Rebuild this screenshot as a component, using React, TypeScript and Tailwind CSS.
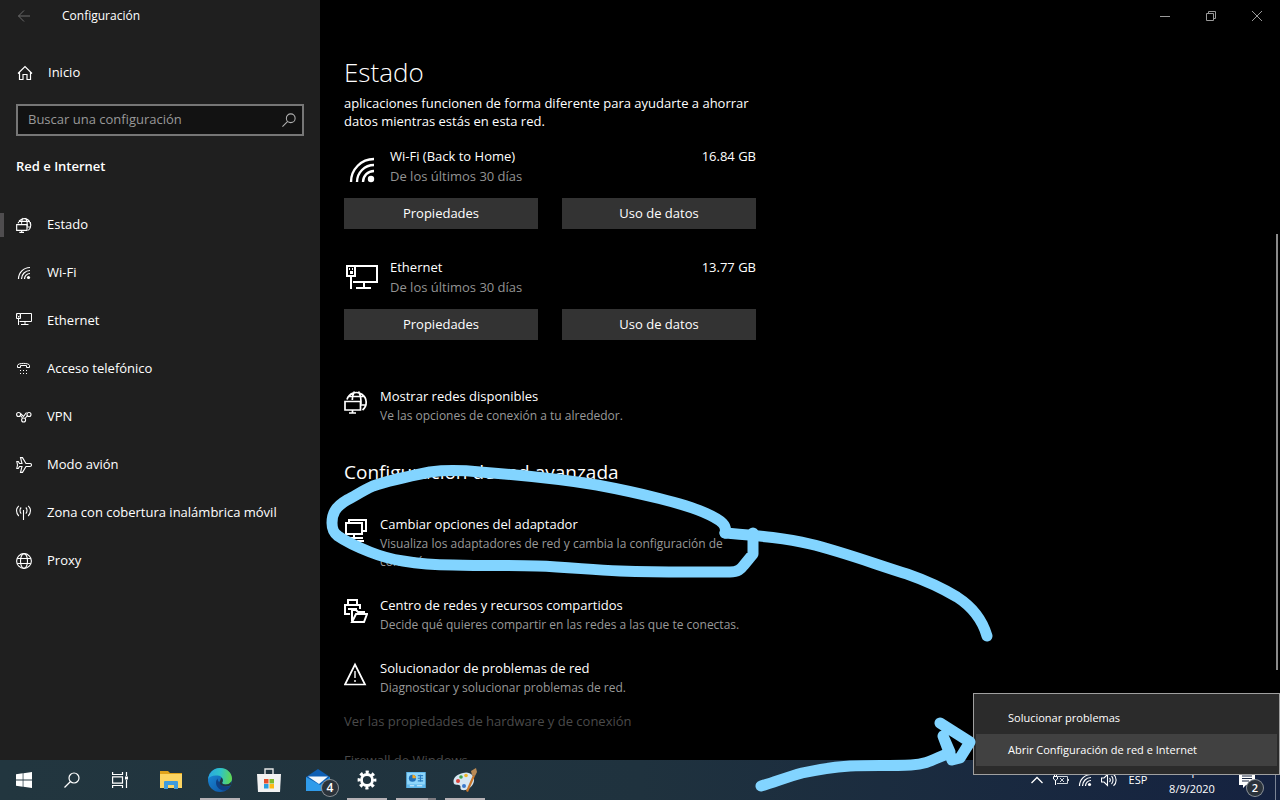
import type { ReactNode } from "react";

type IconProps = { className?: string };

const stroke = {
  fill: "none",
  stroke: "currentColor",
  strokeWidth: 2,
};

function GlobeMonitorIcon({ className }: IconProps) {
  return (
    <svg viewBox="0 0 24 24" className={className} {...stroke} strokeWidth="1.700">
      <path d="M3 9.500A9.800 9.800 0 1 1 18.500 20M10.500 1.500C8.800 4 8.300 7 8.300 10M14.500 1.500C16.500 5 17.200 10 16.800 14M4 6.500H21M17 15H22" />
      <path d="M1 11.500H16.500V20H1ZM8.500 20V23M5 23H12" />
    </svg>
  );
}

function WifiIcon({ className }: IconProps) {
  return (
    <svg viewBox="-4 -4 32 32" className={className} {...stroke} strokeWidth="2.400">
      <path d="M1 24A23 23 0 0 1 24 1M7 24A17 17 0 0 1 24 7M13 24A11 11 0 0 1 24 13" />
      <circle cx="21" cy="21" r="3.200" fill="currentColor" stroke="none" />
    </svg>
  );
}

function EthernetIcon({ className }: IconProps) {
  return (
    <svg viewBox="0 0 32 32" className={className} {...stroke}>
      <path d="M1 1H9V11H1ZM5 11V24M9 1H31V17H7M18 17V23M10 23H25" />
      <path d="M3 3H4V5H3ZM6 3H7V5H6ZM4 6H7V9H4Z" fill="currentColor" stroke="none" />
    </svg>
  );
}

function PhoneIcon({ className }: IconProps) {
  return (
    <svg viewBox="0 0 16 16" className={className} fill="none" stroke="currentColor">
      <path d="M1.500 6.500V4.500C1.500 1.700 13.500 1.700 13.500 4.500V6.500H10.500V4.500H4.500V6.500Z" />
      <path d="M4 9.500H5M7 9.500H8M10 9.500H11M4 12.500H5M7 12.500H8M10 12.500H11" />
    </svg>
  );
}

function VpnIcon({ className }: IconProps) {
  return (
    <svg viewBox="0 0 16 16" className={className} fill="none" stroke="currentColor" strokeWidth="1.100">
      <circle cx="2.600" cy="5.500" r="2" />
      <circle cx="13" cy="5.500" r="2" />
      <circle cx="7.600" cy="11" r="2" />
      <path d="M4.500 4.500L7.500 7.500L10.500 3.500M4.500 6.500L6.500 9M11.500 6.500L9 9.500" />
    </svg>
  );
}

function PlaneIcon({ className }: IconProps) {
  return (
    <svg viewBox="0 0 16 16" className={className} fill="none" stroke="currentColor" strokeWidth="1.100">
      <path d="M4.500 .600H6.500L10 6.500H14C16 6.500 16 9.500 14 9.500H10L6.500 15.400H4.500L6 9.500H3.500L2.300 11.500H.800L1.500 8L.800 4.500H2.300L3.500 6.500H6Z" />
    </svg>
  );
}

function HotspotIcon({ className }: IconProps) {
  return (
    <svg viewBox="0 0 16 16" className={className} fill="none" stroke="currentColor" strokeWidth="1.100">
      <path d="M7.500 5V15M5.200 2.500C3.600 4 3.600 7 5.200 8.600M9.800 2.500C11.400 4 11.400 7 9.800 8.600M2.800 .800C-.200 3.500-.200 8 2.800 11M12.200 .800C15.200 3.500 15.200 8 12.200 11" />
    </svg>
  );
}

function GlobeIcon({ className }: IconProps) {
  return (
    <svg viewBox="0 0 16 16" className={className} fill="none" stroke="currentColor" strokeWidth="1.100">
      <circle cx="8" cy="8" r="7.400" />
      <ellipse cx="8" cy="8" rx="3.500" ry="7.400" />
      <path d="M1.200 5.500H14.800M1.200 10.500H14.800" />
    </svg>
  );
}

function HomeIcon({ className }: IconProps) {
  return (
    <svg viewBox="0 0 16 16" className={className} fill="none" stroke="currentColor" strokeWidth="1.200">
      <path d="M1 8.500L8 1.500L15 8.500M2.500 7.500V14.500H6V9.500H10V14.500H13.500V7.500" />
    </svg>
  );
}

function AdapterIcon({ className }: IconProps) {
  return (
    <svg viewBox="0 0 24 24" className={className} {...stroke}>
      <path d="M5 5V2H22V13H19M2 5H18V16H2ZM10 16V20M4 20H19M13 23H20" />
    </svg>
  );
}

function SharingIcon({ className }: IconProps) {
  return (
    <svg viewBox="0 0 24 24" className={className} {...stroke}>
      <path d="M4 6V1H13V6M6 15H1V6H16V10M4 10H6M6 10H13" />
      <path d="M8 22V11H12L14 13H20V15M8 23L12 15H23L20 23Z" />
    </svg>
  );
}

function WarningIcon({ className }: IconProps) {
  return (
    <svg viewBox="0 0 24 24" className={className} {...stroke} strokeWidth="1.700">
      <path d="M11 2.500L21 22.500H1Z" />
      <path d="M11 9V16M11 18V20" strokeWidth="1.400" />
    </svg>
  );
}

function SearchIcon({ className }: IconProps) {
  return (
    <svg viewBox="0 0 16 16" className={className} fill="none" stroke="currentColor" strokeWidth="1.200">
      <circle cx="10" cy="6" r="5" />
      <path d="M6.500 9.500L.500 15.500" />
    </svg>
  );
}

const navItems = [
  { label: "Estado", icon: GlobeMonitorIcon, active: true },
  { label: "Wi-Fi", icon: WifiIcon },
  { label: "Ethernet", icon: EthernetIcon },
  { label: "Acceso telefónico", icon: PhoneIcon },
  { label: "VPN", icon: VpnIcon },
  { label: "Modo avión", icon: PlaneIcon },
  { label: "Zona con cobertura inalámbrica móvil", icon: HotspotIcon },
  { label: "Proxy", icon: GlobeIcon },
];

function Sidebar() {
  return (
    <aside className="w-80 shrink-0 bg-[#1f1f1f]">
      <div className="flex h-8 items-center">
        <button aria-label="Atrás" className="flex w-12 justify-center text-[#6b6b6b]">
          <svg viewBox="0 0 12 12" className="size-3" fill="none" stroke="currentColor">
            <path d="M6 .500L.500 6L6 11.500M.500 6H12" />
          </svg>
        </button>
        <span className="pl-3.5 text-xs">Configuración</span>
      </div>
      <a href="#inicio" className="mt-[17px] flex h-12 items-center gap-[15px] pl-[17px]">
        <HomeIcon className="size-4" />
        Inicio
      </a>
      <div className="mx-4 mt-[7px] flex h-8 items-center border-2 border-[#767676] bg-[#121212] pr-1.5 pl-2.5">
        <input
          type="text"
          aria-label="Buscar una configuración"
          placeholder="Buscar una configuración"
          className="min-w-0 flex-1 bg-transparent outline-none placeholder:text-[#999999]"
        />
        <SearchIcon className="size-3.5 text-[#b0b0b0]" />
      </div>
      <h2 className="mt-4 h-7 pl-4 leading-7 font-semibold">Red e Internet</h2>
      <nav className="mt-[21px]">
        {navItems.map(({ label, icon: Icon, active }) => (
          <a key={label} href="#" className="flex h-12 items-center">
            <span className={active ? "h-6 w-1 bg-[#4f4d4f]" : "h-6 w-1"} />
            <Icon className="mr-[15px] ml-3 size-4" />
            {label}
          </a>
        ))}
      </nav>
    </aside>
  );
}

function Network({ icon, name, usage }: { icon: ReactNode; name: string; usage: string }) {
  return (
    <section>
      <div className="flex leading-5">
        <div className="mt-2 mr-2.5 h-8 w-9 px-0.5">{icon}</div>
        <div className="flex-1">
          <p>{name}</p>
          <p className="text-[#939393]">De los últimos 30 días</p>
        </div>
        <p>{usage}</p>
      </div>
      <div className="mt-3 grid grid-cols-2 gap-6">
        <button className="h-[31px] bg-[#333333]">Propiedades</button>
        <button className="h-[31px] bg-[#333333]">Uso de datos</button>
      </div>
    </section>
  );
}

function Option({ icon, title, children }: { icon: ReactNode; title: string; children: ReactNode }) {
  return (
    <a href="#" className="flex gap-3">
      <span className="mt-1 size-6 shrink-0">{icon}</span>
      <span>
        <span className="block leading-[21px]">{title}</span>
        <span className="block text-xs leading-[18px] text-[#999999]">{children}</span>
      </span>
    </a>
  );
}

function WindowControls() {
  return (
    <div className="flex h-8 justify-end text-[#9a9a9a]">
      <button aria-label="Minimizar" className="flex w-[46px] items-center justify-center">
        <svg viewBox="0 0 10 10" className="size-2.5" fill="none" stroke="currentColor">
          <path d="M0 5.500H10" />
        </svg>
      </button>
      <button aria-label="Restaurar" className="flex w-[46px] items-center justify-center">
        <svg viewBox="0 0 10 10" className="size-2.5" fill="none" stroke="currentColor">
          <path d="M.500 2.500H7.500V9.500H.500ZM2.500 2.500V.500H9.500V7.500H7.500" />
        </svg>
      </button>
      <button aria-label="Cerrar" className="flex w-[46px] items-center justify-center">
        <svg viewBox="0 0 10 10" className="size-2.5" fill="none" stroke="currentColor">
          <path d="M0 0L10 10M10 0L0 10" />
        </svg>
      </button>
    </div>
  );
}

function Content() {
  return (
    <main className="flex min-w-0 flex-1 flex-col bg-black">
      <WindowControls />
      <div className="flex min-h-0 flex-1">
        <div className="flex-1 overflow-hidden pt-5 pl-6">
          <div className="w-full max-w-[412px]">
            <h1 className="h-[42px] text-[26px] leading-10 font-light">Estado</h1>
            <p className="leading-[18px]">
              aplicaciones funcionen de forma diferente para ayudarte a ahorrar datos mientras estás en esta red.
            </p>
            <div className="mt-4 flex flex-col gap-7">
              <Network icon={<WifiIcon className="size-8" />} name="Wi-Fi (Back to Home)" usage="16.84 GB" />
              <Network icon={<EthernetIcon className="size-8" />} name="Ethernet" usage="13.77 GB" />
            </div>
            <div className="mt-[46px]">
              <Option icon={<GlobeMonitorIcon className="size-6" />} title="Mostrar redes disponibles">
                Ve las opciones de conexión a tu alrededor.
              </Option>
            </div>
            <h2 className="mt-[33px] text-[19px] leading-7">Configuración de red avanzada</h2>
            <div className="mt-7 flex flex-col gap-6">
              <Option icon={<AdapterIcon className="size-6" />} title="Cambiar opciones del adaptador">
                Visualiza los adaptadores de red y cambia la configuración de conexión.
              </Option>
              <Option icon={<SharingIcon className="size-6" />} title="Centro de redes y recursos compartidos">
                Decide qué quieres compartir en las redes a las que te conectas.
              </Option>
              <Option icon={<WarningIcon className="size-6" />} title="Solucionador de problemas de red">
                Diagnosticar y solucionar problemas de red.
              </Option>
            </div>
            <div className="mt-[15px] flex flex-col items-start gap-[21px] leading-[18px] text-[#4a4a4a]">
              <a href="#">Ver las propiedades de hardware y de conexión</a>
              <a href="#">Firewall de Windows</a>
            </div>
          </div>
        </div>
        <div className="mt-[202px] mr-0.5 h-[436px] w-0.5 shrink-0 bg-[#8a8a8a]" />
      </div>
    </main>
  );
}

function WindowsLogo() {
  return (
    <svg viewBox="0 0 16 16" className="size-4" fill="#fff">
      <path d="M0 2.300L6.700 1.300V7.600H0ZM7.400 1.200L16 0V7.600H7.400ZM0 8.400H6.700V14.700L0 13.700ZM7.400 8.400H16V16L7.400 14.800Z" />
    </svg>
  );
}

function TaskViewIcon() {
  return (
    <svg viewBox="0 0 16 16" className="size-4" fill="none" stroke="#fff" strokeWidth="1.200">
      <path d="M.600 0V2.500H10.500V0M.600 16V13.500H10.500V16M.600 4.800H10.500V11.200H.600ZM14.500 0V4M14.500 8V16" />
      <path d="M13 4.500H16V7.500H13Z" fill="#fff" stroke="none" />
    </svg>
  );
}

function ExplorerIcon() {
  return (
    <svg viewBox="0 0 24 24" className="size-6">
      <path d="M1 3H9L11 5H23V20H1Z" fill="#e0a21b" />
      <path d="M1 6H23V20H1Z" fill="#fcd462" />
      <path d="M5 21V14Q5 13 6 13H18Q19 13 19 14V21H15V17H9V21Z" fill="#3f9bdc" />
    </svg>
  );
}

function EdgeIcon() {
  return (
    <svg viewBox="0 0 24 24" className="size-6">
      <defs>
        <linearGradient id="edgeTop" x1="0" y1=".4" x2="1" y2=".5">
          <stop offset="0" stopColor="#2aa7e0" />
          <stop offset=".5" stopColor="#2fc3c8" />
          <stop offset="1" stopColor="#62d84e" />
        </linearGradient>
        <linearGradient id="edgeLow" x1="0" y1="0" x2="1" y2="1">
          <stop offset="0" stopColor="#1b8fdc" />
          <stop offset="1" stopColor="#0c4c9c" />
        </linearGradient>
      </defs>
      <circle cx="12" cy="12" r="12" fill="url(#edgeLow)" />
      <path d="M.200 11C1 4.500 6 0 12 0C19 0 24 5 24 10.500C24 14.500 21 16.500 18 16.500C15 16.500 13.500 15.500 14.500 14C15.500 12.500 15 8 9.500 7.500C5 7 1.500 8.500 .200 11Z" fill="url(#edgeTop)" />
      <path d="M9.500 10.500C6 15 9 21 15 22.500C18 22.800 21.500 20.500 22.500 18C17 20 12.500 17.500 13.500 15C11 14.500 9.500 13 9.500 10.500Z" fill="#0f3f83" />
      <path d="M13.500 9.500C15.500 11.500 15 13.500 14.300 14.200C13.500 15.400 15 16.500 17.500 16.500C20 16.500 22.500 15.500 23.500 13L23.300 16.800C19 20 12 18.500 11.500 14Z" fill="#22353f" />
    </svg>
  );
}

function StoreIcon() {
  return (
    <svg viewBox="0 0 24 24" className="size-6">
      <path d="M8 7V1H16V7" fill="none" stroke="#e6e6e6" strokeWidth="1.400" />
      <path d="M0 6H24L23 24H1Z" fill="#f2f2f2" />
      <path d="M7 11H11.500V15.500H7Z" fill="#e8502b" />
      <path d="M12.500 11H17V15.500H12.500Z" fill="#7fba2c" />
      <path d="M7 16H11.500V20.500H7Z" fill="#2a9fe0" />
      <path d="M12.500 16H17V20.500H12.500Z" fill="#fdb913" />
    </svg>
  );
}

function MailIcon() {
  return (
    <svg viewBox="0 0 24 24" className="size-6">
      <path d="M0 9L12 1L24 9V22H0Z" fill="#0f5fb4" />
      <path d="M0 9L14 17L24 9V23H0Z" fill="#2f9bea" />
      <path d="M2 8.500H22L13 16Z" fill="#f4f8fc" />
    </svg>
  );
}

function GearIcon() {
  return (
    <svg viewBox="0 0 20 20" className="size-5" fill="none" stroke="#fff">
      <circle cx="10" cy="10" r="5.500" strokeWidth="2.800" />
      <circle cx="10" cy="10" r="7.800" strokeWidth="3.200" strokeDasharray="3.060 3.060" strokeDashoffset="1.530" />
    </svg>
  );
}

function ControlPanelIcon() {
  return (
    <svg viewBox="0 0 22 18" className="h-4 w-5">
      <path d="M0 0H22V18H0Z" fill="#5fb8ec" />
      <path d="M1 1H21V14H1Z" fill="#8fd6fa" />
      <circle cx="7" cy="7" r="4" fill="#2170b8" />
      <path d="M7 7V3A4 4 0 0 1 11 7Z" fill="#f5a623" />
      <path d="M13 4H19M13 7H19M13 10H19M16 3V11" stroke="#2a7fc4" strokeWidth="1.300" />
      <path d="M4 15.500H9M12 15.500H18" stroke="#e9f7ff" />
    </svg>
  );
}

function PaintIcon() {
  return (
    <svg viewBox="0 0 24 24" className="size-6">
      <path d="M10 5C16 3 22 7 21 13C20 19 14 23 9 22C6 21 9 18 6 17C3 16 1 18 .500 14C0 9 5 6 10 5Z" fill="#d5e6f2" />
      <circle cx="5" cy="13" r="2" fill="#d9443c" />
      <circle cx="8" cy="9" r="1.800" fill="#3fa34d" />
      <circle cx="13" cy="7.500" r="1.800" fill="#f0b429" />
      <circle cx="11" cy="18" r="2" fill="#3a78c9" />
      <path d="M20 7L13 23L15 24L22 8Z" fill="#c9772b" />
      <path d="M18 3L23 0L24 4L22 8L19 7Z" fill="#b98a56" />
    </svg>
  );
}

function Badge({ children }: { children: ReactNode }) {
  return (
    <span className="absolute flex size-4 translate-x-3 translate-y-2 items-center justify-center rounded-full bg-[#2b333b] text-xs font-semibold ring-1 ring-[#8b9196]">
      {children}
    </span>
  );
}

const apps = [
  { name: "Explorador de archivos", icon: <ExplorerIcon /> },
  { name: "Microsoft Edge", icon: <EdgeIcon />, open: true },
  { name: "Microsoft Store", icon: <StoreIcon /> },
  { name: "Correo", icon: <MailIcon />, badge: 4 },
  { name: "Ajustes", icon: <GearIcon />, open: true },
  { name: "Panel de control", icon: <ControlPanelIcon />, open: true, stacked: true },
  { name: "Paint", icon: <PaintIcon />, open: true },
];

function Taskbar() {
  return (
    <footer className="flex h-10 shrink-0 justify-between bg-linear-to-r from-[#22363f] via-[#1f323e] to-[#152240]">
      <div className="flex">
        <button aria-label="Inicio" className="flex w-12 items-center justify-center">
          <WindowsLogo />
        </button>
        <button aria-label="Buscar" className="flex w-12 items-center justify-center">
          <SearchIcon className="size-4" />
        </button>
        <button aria-label="Vista de tareas" className="flex w-12 items-center justify-center">
          <TaskViewIcon />
        </button>
        <div className="ml-[3px] flex gap-px">
          {apps.map((app) => (
            <button key={app.name} aria-label={app.name} className="relative flex w-12 items-center justify-center">
              {app.icon}
              {app.badge && <Badge>{app.badge}</Badge>}
              {app.open && (
                <span className="absolute inset-x-1 bottom-0 flex h-0.5 justify-end bg-[#b5b1b5]">
                  {app.stacked && <span className="w-2 bg-[#7d7b80]" />}
                </span>
              )}
            </button>
          ))}
        </div>
      </div>
      <div className="flex text-[11px]">
        <button aria-label="Mostrar iconos ocultos" className="flex w-6 items-center justify-center">
          <svg viewBox="0 0 12 8" className="h-2 w-3" fill="none" stroke="#fff" strokeWidth="1.300">
            <path d="M.500 7L6 1.500L11.500 7" />
          </svg>
        </button>
        <button aria-label="Batería" className="flex w-6 items-center justify-center">
          <svg viewBox="0 0 16 12" className="h-3 w-4" fill="none" stroke="#fff">
            <path d="M5 2.500H14.500V9.500H4M15.500 5V7M7 4L11 8M11 4L7 8" stroke="#cfd4da" />
            <path d="M.500 2.500H4.500V5L2.500 6.500L.500 5ZM1.500 0V2M3.500 0V2M2.500 6V11" />
          </svg>
        </button>
        <button aria-label="Red" className="flex w-6 items-center justify-center">
          <WifiIcon className="size-4" />
        </button>
        <button aria-label="Volumen" className="flex w-6 items-center justify-center">
          <svg viewBox="0 0 16 14" className="h-3.5 w-4" fill="none" stroke="#fff" strokeWidth="1.100">
            <path d="M.500 5H3L6.500 1.500V12.500L3 9H.500ZM8.500 5C9.500 6.200 9.500 7.800 8.500 9M10.500 3C12.500 5 12.500 9 10.500 11M12.500 1.200C16 4 16 10 12.500 12.800" />
          </svg>
        </button>
        <button className="w-[34px]">ESP</button>
        <button className="w-[74px] leading-[18px]">
          <span className="block">1:25 p. m.</span>
          <span className="block">8/9/2020</span>
        </button>
        <button aria-label="Notificaciones" className="relative flex w-[46px] items-center pl-2.5">
          <svg viewBox="0 0 16 16" className="size-4">
            <path d="M0 0H16V13H7L4 16V13H0Z" fill="#fff" />
            <path d="M3 4H13M3 6.500H13M3 9H10" stroke="#1a2740" />
          </svg>
          <span className="absolute left-[18px] top-5 flex size-4 items-center justify-center rounded-full bg-[#2b333b] font-semibold ring-1 ring-[#8b9196]">
            2
          </span>
        </button>
        <span className="w-[5px] border-l border-[#7b8494]" />
      </div>
    </footer>
  );
}

function ContextMenu() {
  return (
    <div className="absolute right-0 bottom-[25px] w-[307px] border border-[#a0a0a0] bg-[#2b2b2b] px-0.5 py-2 text-[11px]">
      <button className="block h-8 w-full pl-8 text-left">Solucionar problemas</button>
      <button className="block h-8 w-full bg-[#414141] pl-8 text-left">Abrir Configuración de red e Internet</button>
    </div>
  );
}

// hand-drawn marker: loop round the adapter option, tail, and arrow to the menu
function Marker() {
  return (
    <svg
      viewBox="0 0 1280 800"
      className="pointer-events-none absolute inset-0 size-full"
      fill="none"
      stroke="#82d4ff"
      strokeWidth="11"
      strokeLinecap="round"
      strokeLinejoin="round"
    >
      <path d="M725 533C727 526 724 521 703 512C685 504 640 493 597 485C560 479 520 475 480 472C460 470 445 470 430 472C410 476 390 480 373 486C362 491 355 496 347 500C335 507 332 514 332 523C332 530 334 533 338 536C348 543 360 548 370 552C380 556 390 559 403 561C420 564 435 565 453 565C490 566 510 565 537 566C570 567 590 570 620 571C650 572 665 572 687 572H730C738 572 741 569 744 565L753 554V533" />
      <path d="M725 533C760 536 785 538 810 544C840 551 875 564 907 574C930 582 947 591 957 597C974 608 983 622 987 636" />
      <path d="M761 786C775 782 787 777 802 773C820 769 835 767 850 766C870 765 890 766 911 765C928 764 934 759 947 754M940 723L970 742L960 758L952 760L943 736L950 752" />
    </svg>
  );
}

export default function App() {
  return (
    <div className="relative flex h-screen flex-col overflow-hidden bg-black font-['Open_Sans','Noto_Sans',sans-serif] text-[13px] text-white">
      <div className="flex min-h-0 flex-1">
        <Sidebar />
        <Content />
      </div>
      <Taskbar />
      <ContextMenu />
      <Marker />
    </div>
  );
}
